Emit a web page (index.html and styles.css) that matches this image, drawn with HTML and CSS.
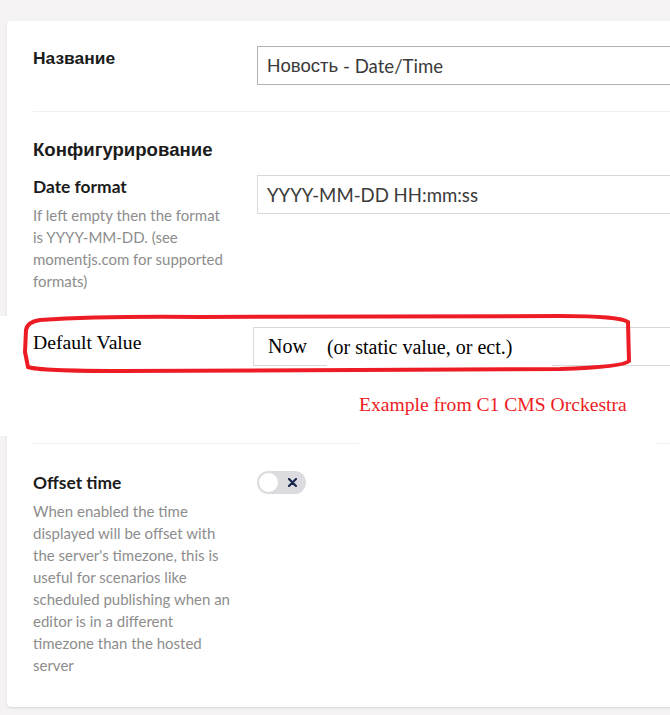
FILE: index.html
```html
<!DOCTYPE html>
<html lang="en">

<head>
    <meta charset="UTF-8">
    <meta name="viewport" content="width=device-width, initial-scale=1.0">
    <title>Date/Time settings</title>
    <link rel="stylesheet" href="styles.css">
</head>

<body>
    <div class="card">
        <div class="row">
            <div class="label">
                <div class="title cyr">Название</div>
            </div>
            <div class="control">
                <div class="input dark"><span class="cyr">Новость</span>&nbsp;- Date/Time</div>
            </div>
        </div>

        <div class="line"></div>

        <h3 class="section cyr">Конфигурирование</h3>

        <div class="row">
            <div class="label">
                <div class="title">Date format</div>
                <div class="desc">If left empty then the format is YYYY-MM-DD. (see momentjs.com for supported formats)</div>
            </div>
            <div class="control">
                <div class="input">YYYY-MM-DD HH:mm:ss</div>
            </div>
        </div>

        <!-- pasted note -->
        <div class="paste">
            <div class="row serif">
                <div class="label">
                    <div class="title">Default Value</div>
                </div>
                <div class="control">
                    <div class="input">
                        <span class="now">Now</span>
                        <span class="hint">(or static value, or ect.)</span>
                    </div>
                </div>
            </div>
            <div class="note">Example from C1 CMS Orckestra</div>
            <svg class="ring" width="640" height="64" viewBox="0 0 640 64">
                <path d="M40 6 Q100 2 200 3 L560 2 Q620 2 628 8 L629 47 Q624 53 560 55 L120 57 Q40 57 28 53 L25 38 L26 16 Q27 8 40 6 Z" fill="none" stroke="#ed1c24" stroke-width="4"/>
            </svg>
        </div>

        <div class="line gap"></div>

        <div class="row">
            <div class="label">
                <div class="title">Offset time</div>
                <div class="desc">When enabled the time displayed will be offset with the server's timezone, this is useful for scenarios like scheduled publishing when an editor is in a different timezone than the hosted server</div>
            </div>
            <div class="control">
                <div class="toggle">
                    <span class="knob"></span>
                    <svg class="x" width="9" height="9" viewBox="0 0 9 9">
                        <path d="M1 1 L8 8 M8 1 L1 8" stroke="#1b264f" stroke-width="2.2" stroke-linecap="round"/>
                    </svg>
                </div>
            </div>
        </div>
    </div>
</body>

</html>
```

FILE: styles.css
```css
* {
    margin: 0;
    padding: 0;
    box-sizing: border-box;
}

body {
    background: #f4f2f3;
    font-family: Lato, "Liberation Sans", sans-serif;
    color: #1b1b1b;
    padding: 21px 0 0 7px;
    height: 715px;
    overflow: hidden;
}

.card {
    background: #fff;
    border-radius: 4px 0 0 4px;
    box-shadow: 0 1px 2px rgba(0, 0, 0, .12);
    padding: 25px 0 31px 26px;
    width: 690px;
    position: relative;
}

.row {
    display: flex;
    gap: 24px;
}

.label {
    width: 200px;
    flex-shrink: 0;
}

.control {
    flex: 1;
}

.cyr {
    font-family: "Liberation Sans", sans-serif;
}

.title {
    font-size: 17.4px;
    font-weight: 700;
    line-height: 22px;
    padding-top: 1px;
}

.desc {
    font-size: 15px;
    line-height: 22px;
    color: #8d8d8d;
    margin-top: 6px;
}

.input {
    height: 39px;
    border: 1px solid #d9d9d9;
    border-right: none;
    padding: 0 9px;
    display: flex;
    align-items: center;
    font-size: 18.6px;
    color: #3a3a3a;
}

.input.dark {
    border-color: #b3b3b3;
}

.line {
    height: 1px;
    background: #efefef;
    margin: 26px 0 0 0;
}

.section {
    font-size: 18.6px;
    font-weight: 700;
    line-height: 24px;
    margin: 26px 0 13px;
}

/* the note block is white right to the page edge */
.paste {
    margin: 24px 0 0 -33px;
    padding: 11px 0 0 33px;
    background: #fff;
    height: 120px;
    position: relative;
}

.serif {
    font-family: "Liberation Serif", serif;
    color: #000;
}

.serif .title {
    font-weight: 400;
    font-size: 19.7px;
    padding-top: 4px;
}

.paste .control {
    margin-left: -4px;
}

.paste .input {
    font-size: 20px;
    color: #000;
    padding-left: 14px;
    align-items: stretch;
}

.now,
.hint {
    display: flex;
    align-items: center;
}

.hint {
    margin: 0 0 -1px 20px;
    padding-right: 40px;
    background: #fff;
}

.note {
    font-family: "Liberation Serif", serif;
    font-size: 19.6px;
    color: #ed1c24;
    margin: 28px 0 0 326px;
}

.ring {
    position: absolute;
    left: 0;
    top: -2px;
}

.line.gap {
    margin-top: 7px;
    background: linear-gradient(to right, #efefef 0 326px, #fff 326px 624px, #efefef 624px);
}

.toggle {
    width: 49px;
    height: 23px;
    border-radius: 12px;
    background: #dcdce0;
    position: relative;
}

.knob {
    position: absolute;
    left: 2px;
    top: 2px;
    width: 19px;
    height: 19px;
    border-radius: 50%;
    background: #fff;
}

.x {
    position: absolute;
    left: 31px;
    top: 7px;
}

.row:last-child {
    margin-top: 27px;
}
```
